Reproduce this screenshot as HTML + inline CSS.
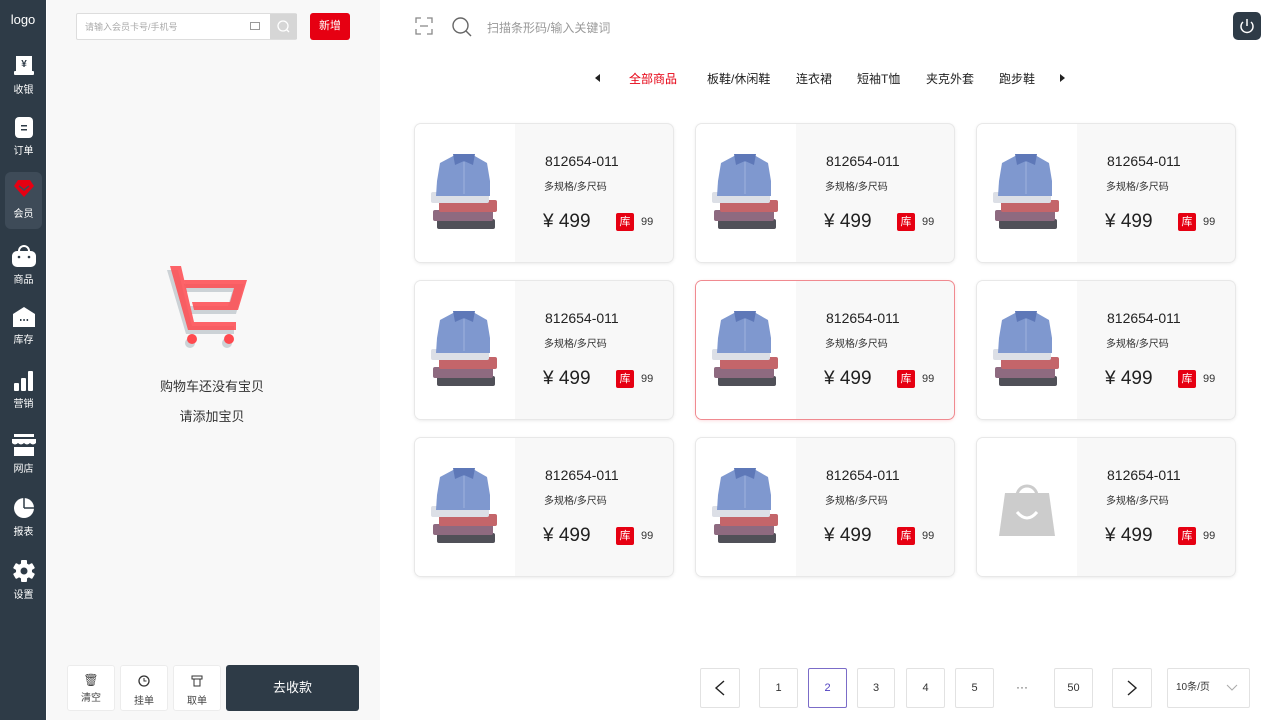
<!DOCTYPE html>
<html><head><meta charset="utf-8"><style>
*{margin:0;padding:0;box-sizing:border-box}
body{width:1280px;height:720px;position:relative;overflow:hidden;background:#fff;font-family:"Liberation Sans","Noto Sans CJK SC",sans-serif;color:#222}
.abs{position:absolute}
#side{left:0;top:0;width:46px;height:720px;background:#2e3b47}
.nav{position:absolute;left:5px;width:37px;height:56px;text-align:center;color:#fff;font-size:10px}
.nav svg{display:block;margin:0 auto}
.nav span{display:block;margin-top:4px}
#left{left:47px;top:0;width:333px;height:720px;background:#f8f8f8}
.card{position:absolute;width:258px;height:138px;border-radius:6px;background:#f8f8f8;box-shadow:0 0 0 1px #e8e8e8,0 1px 4px rgba(0,0,0,.12);overflow:hidden}
.card .im{position:absolute;left:0;top:0;width:100px;height:138px;background:#fff}
.card .code{position:absolute;left:130px;top:29px;font-size:14px;color:#222}
.card .spec{position:absolute;left:129px;top:54px;font-size:10px;color:#333}
.card .pr{position:absolute;left:128px;top:87px;font-size:19px;color:#222}
.card .ku{position:absolute;left:201px;top:89px;width:18px;height:18px;background:#e60012;color:#fff;font-size:11px;line-height:18px;text-align:center;border-radius:2px}
.card .n{position:absolute;left:226px;top:92px;font-size:11px;color:#333}
.pg{position:absolute;top:668px;height:40px;border:1px solid #e2e2e2;border-radius:2px;text-align:center;line-height:38px;font-size:11px;color:#333;background:#fff}
.bb{position:absolute;top:665px;width:48px;height:46px;background:#fff;border:1px solid #ececec;border-radius:3px;text-align:center;font-size:10px;color:#444}
</style></head><body>
<svg width="0" height="0" style="position:absolute"><defs>
<g id="shirt">
<rect x="22" y="83" width="58" height="10" rx="2" fill="#505058"/>
<rect x="18" y="74" width="60" height="11" rx="2" fill="#8e6a80"/>
<rect x="24" y="64" width="58" height="12" rx="2" fill="#c4656a"/>
<rect x="16" y="56" width="58" height="11" rx="2" fill="#dcdfe6"/>
<path d="M22 45 L25 27 L40 19 L58 19 L72 27 L75 45 L75 60 L21 60 Z" fill="#7f98cf"/>
<path d="M38 18 L60 18 L58 29 L49 25 L40 29 Z" fill="#5e78b8"/>
<line x1="49" y1="26" x2="49" y2="58" stroke="#9fb2dd" stroke-width="1"/>
</g></defs></svg>

<div id="side" class="abs">
<div class="abs" style="left:0;top:12px;width:46px;text-align:center;color:#fff;font-size:13px">logo</div>
<div class="nav" style="top:55px"><svg width="20" height="22" viewBox="0 0 20 22"><rect x="2" y="1" width="16" height="15" fill="#fff"/><rect x="0" y="16" width="20" height="4" rx="1" fill="#fff"/><text x="10" y="12" font-size="10" fill="#2e3b47" text-anchor="middle" font-weight="bold">¥</text></svg><span>收银</span></div>
<div class="nav" style="top:116px"><svg width="18" height="22" viewBox="0 0 18 22"><rect x="0" y="1" width="18" height="21" rx="4" fill="#fff"/><rect x="6" y="9" width="6" height="1.5" fill="#2e3b47"/><rect x="6" y="13" width="6" height="1.5" fill="#2e3b47"/></svg><span>订单</span></div>
<div class="abs" style="left:5px;top:172px;width:37px;height:57px;background:#3e4b58;border-radius:6px"></div>
<div class="nav" style="top:180px"><svg width="20" height="18" viewBox="0 0 20 18"><path d="M4 0 H16 L20 6 L10 17 L0 6 Z" fill="#e60012"/><path d="M5 6 L10 10 L15 6" stroke="#3e4b58" stroke-width="1.5" fill="none"/></svg><span style="margin-top:7px">会员</span></div>
<div class="nav" style="top:243px"><svg width="24" height="24" viewBox="0 0 24 24"><path d="M7 8 A5 5 0 0 1 17 8" stroke="#fff" stroke-width="2" fill="none"/><rect x="0" y="8" width="24" height="16" rx="5" fill="#fff"/><circle cx="7" cy="14" r="1.3" fill="#2e3b47"/><circle cx="17" cy="14" r="1.3" fill="#2e3b47"/></svg><span>商品</span></div>
<div class="nav" style="top:307px"><svg width="22" height="20" viewBox="0 0 22 20"><path d="M0 7 L11 0 L22 7 V20 H0 Z" fill="#fff"/><rect x="7" y="12" width="1.5" height="2" fill="#2e3b47"/><rect x="10.3" y="12" width="1.5" height="2" fill="#2e3b47"/><rect x="13.6" y="12" width="1.5" height="2" fill="#2e3b47"/></svg><span>库存</span></div>
<div class="nav" style="top:371px"><svg width="20" height="20" viewBox="0 0 20 20"><rect x="0" y="12" width="5" height="8" rx="1" fill="#fff"/><rect x="7" y="7" width="5" height="13" rx="1" fill="#fff"/><rect x="14" y="0" width="5" height="20" rx="1" fill="#fff"/></svg><span>营销</span></div>
<div class="nav" style="top:434px"><svg width="24" height="22" viewBox="0 0 24 22"><rect x="2" y="0" width="20" height="3" fill="#fff"/><path d="M0 5 H24 V9 Q21 12 18 9 Q15 12 12 9 Q9 12 6 9 Q3 12 0 9Z" fill="#fff"/><rect x="2" y="13" width="20" height="9" fill="#fff"/></svg><span>网店</span></div>
<div class="nav" style="top:497px"><svg width="22" height="22" viewBox="0 0 22 22"><circle cx="11" cy="11" r="10" fill="#fff"/><path d="M11 11 V1 M11 11 H21" stroke="#2e3b47" stroke-width="1.5"/></svg><span>报表</span></div>
<div class="nav" style="top:560px"><svg width="22" height="22" viewBox="0 0 22 22"><g fill="#fff"><circle cx="11" cy="11" r="8"/><rect x="8" y="0" width="6" height="22" rx="1"/><rect x="8" y="0" width="6" height="22" rx="1" transform="rotate(60 11 11)"/><rect x="8" y="0" width="6" height="22" rx="1" transform="rotate(120 11 11)"/></g><circle cx="11" cy="11" r="3.5" fill="#2e3b47"/></svg><span>设置</span></div>
</div>

<div id="left" class="abs">
<div class="abs" style="left:29px;top:13px;width:221px;height:27px;background:#fff;border:1px solid #ddd;border-radius:2px"></div>
<div class="abs" style="left:38px;top:20px;font-size:9px;color:#aaa">请输入会员卡号/手机号</div>
<div class="abs" style="left:203px;top:22px;width:10px;height:8px;border:1px solid #999"></div>
<div class="abs" style="left:223px;top:14px;width:27px;height:25px;background:#d6d6d6"><svg width="27" height="25"><circle cx="13" cy="12" r="5" stroke="#fff" stroke-width="1.3" fill="none"/><line x1="16.5" y1="15.5" x2="19" y2="18" stroke="#fff" stroke-width="1.3"/></svg></div>
<div class="abs" style="left:263px;top:13px;width:40px;height:27px;background:#e60012;border-radius:3px;color:#fff;font-size:11px;line-height:27px;text-align:center">新增</div>
<svg class="abs" style="left:117px;top:264px" width="84" height="84" viewBox="0 0 84 84">
<g fill="#ccd2d6"><path d="M3 6 H14 L28 62 H70 V70 H22 Z"/><path d="M20 20 H80 L72 50 H28 L26 42 H64 L68 28 H22Z"/><circle cx="26" cy="79" r="5"/><circle cx="63" cy="79" r="5"/></g>
<g fill="#ff4a4f" opacity=".85"><path d="M6 2 H17 L30 58 H72 V66 H24 Z"/><path d="M20 16 H83 L74 46 H30 L28 38 H66 L70 24 H22Z"/></g>
<circle cx="28" cy="75" r="5" fill="#ff4a4f"/><circle cx="65" cy="75" r="5" fill="#ff4a4f"/>
</svg>
<div class="abs" style="left:0;top:376px;width:330px;text-align:center;font-size:13px;color:#333">购物车还没有宝贝</div>
<div class="abs" style="left:0;top:406px;width:330px;text-align:center;font-size:13px;color:#333">请添加宝贝</div>
<div class="bb" style="left:20px"><div style="margin-top:7px;font-size:12px">🗑</div><div style="margin-top:2px">清空</div></div>
<div class="bb" style="left:73px"><svg style="margin-top:9px" width="12" height="12"><circle cx="6" cy="6" r="5" stroke="#333" fill="none" stroke-width="1.3"/><path d="M6 3V6H8.5" stroke="#333" fill="none"/></svg><div style="margin-top:2px">挂单</div></div>
<div class="bb" style="left:126px"><svg style="margin-top:9px" width="12" height="12"><rect x="1" y="1" width="10" height="3" stroke="#333" fill="none"/><rect x="3" y="4" width="6" height="7" stroke="#333" fill="none"/></svg><div style="margin-top:2px">取单</div></div>
<div class="abs" style="left:179px;top:665px;width:133px;height:46px;background:#2e3b47;border-radius:3px;color:#fff;font-size:13px;line-height:46px;text-align:center">去收款</div>
</div>

<svg class="abs" style="left:415px;top:17px" width="18" height="18"><path d="M1 6V1H6M12 1H17V6M17 12V17H12M6 17H1V12M5 9H13" stroke="#888" stroke-width="1.3" fill="none"/></svg>
<svg class="abs" style="left:451px;top:16px" width="22" height="22"><circle cx="9.5" cy="9.5" r="7.5" stroke="#666" stroke-width="1.4" fill="none"/><line x1="15" y1="15" x2="20" y2="20" stroke="#666" stroke-width="1.4"/></svg>
<div class="abs" style="left:487px;top:19px;font-size:12px;color:#999">扫描条形码/输入关键词</div>
<div class="abs" style="left:1233px;top:12px;width:28px;height:28px;background:#2e3b47;border-radius:5px"><svg width="28" height="28"><path d="M10 10 A6 6 0 1 0 18 10" stroke="#fff" stroke-width="1.5" fill="none"/><line x1="14" y1="7" x2="14" y2="14" stroke="#fff" stroke-width="1.5"/></svg></div>
<div class="abs" style="left:595px;top:74px;width:0;height:0;border-top:4px solid transparent;border-bottom:4px solid transparent;border-right:5px solid #222"></div>
<div class="abs" style="left:1060px;top:74px;width:0;height:0;border-top:4px solid transparent;border-bottom:4px solid transparent;border-left:5px solid #222"></div>
<div class="abs" style="left:629px;top:70px;font-size:12px;color:#e60012">全部商品</div>
<div class="abs" style="left:707px;top:70px;font-size:12px">板鞋/休闲鞋</div>
<div class="abs" style="left:796px;top:70px;font-size:12px">连衣裙</div>
<div class="abs" style="left:857px;top:70px;font-size:12px">短袖T恤</div>
<div class="abs" style="left:926px;top:70px;font-size:12px">夹克外套</div>
<div class="abs" style="left:999px;top:70px;font-size:12px">跑步鞋</div>

<div id="cards"></div>
<script>
var xs=[415,696,977],ys=[124,281,438],h='';
for(var r=0;r<3;r++)for(var c=0;c<3;c++){
 var sel=(r==1&&c==1),bag=(r==2&&c==2);
 var img=bag?'<svg width="100" height="138"><path d="M40 58 A10 10 0 0 1 60 58" stroke="#ccc" stroke-width="3" fill="none"/><path d="M28 55 H72 L78 98 H22 Z" fill="#ccc"/><path d="M40 74 Q50 86 60 74" stroke="#fff" stroke-width="3" fill="none"/></svg>':'<svg width="100" height="138" viewBox="0 0 100 138"><use href="#shirt" y="12"/></svg>';
 h+='<div class="card" style="left:'+xs[c]+'px;top:'+ys[r]+'px'+(sel?';box-shadow:0 0 0 1px #f08a90,0 1px 4px rgba(230,0,18,.2)':'')+'"><div class="im">'+img+'</div><div class="code">812654-011</div><div class="spec">多规格/多尺码</div><div class="pr">¥ 499</div><div class="ku">库</div><div class="n">99</div></div>';
}
document.getElementById('cards').innerHTML=h;
</script>

<div class="pg" style="left:700px;width:40px"><svg width="38" height="38"><path d="M23 12 L15 19 L23 26" stroke="#222" stroke-width="1.4" fill="none"/></svg></div>
<div class="pg" style="left:759px;width:39px">1</div>
<div class="pg" style="left:808px;width:39px;border-color:#7b6cc8;color:#5040c0">2</div>
<div class="pg" style="left:857px;width:38px">3</div>
<div class="pg" style="left:906px;width:39px">4</div>
<div class="pg" style="left:955px;width:39px">5</div>
<div class="abs" style="left:1016px;top:680px;font-size:12px;color:#555">···</div>
<div class="pg" style="left:1054px;width:39px">50</div>
<div class="pg" style="left:1112px;width:40px"><svg width="38" height="38"><path d="M15 12 L23 19 L15 26" stroke="#222" stroke-width="1.4" fill="none"/></svg></div>
<div class="pg" style="left:1167px;width:83px;text-align:left;padding-left:8px;font-size:10px">10条/页<svg class="abs" style="left:58px;top:14px" width="12" height="10"><path d="M1 2 L6 7 L11 2" stroke="#aaa" fill="none"/></svg></div>
</body></html>
